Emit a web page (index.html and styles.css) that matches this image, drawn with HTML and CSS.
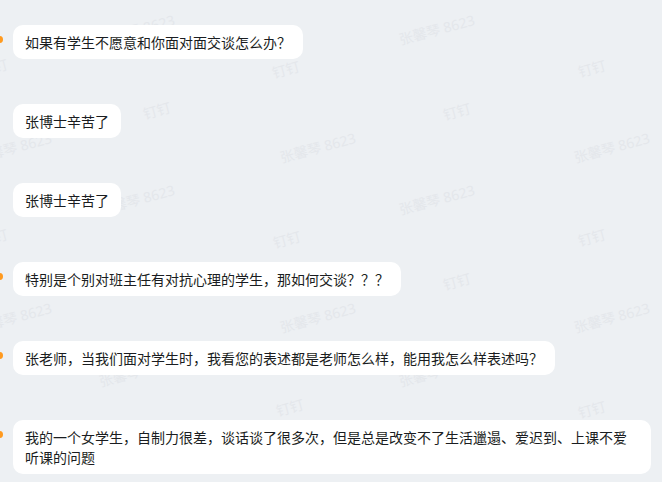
FILE: index.html
```html
<!DOCTYPE html>
<html lang="zh-CN">
<head>
<meta charset="utf-8">
<title>消息</title>
<link rel="stylesheet" href="styles.css">
</head>
<body>
<div class="page">
  <div class="watermarks" aria-hidden="true">
    <span class="wm name n1">张馨琴 8623</span>
    <span class="wm name n2">张馨琴 8623</span>
    <span class="wm name n3">张馨琴 8623</span>
    <span class="wm name n4">张馨琴 8623</span>
    <span class="wm name n5">张馨琴 8623</span>
    <span class="wm name n6">张馨琴 8623</span>
    <span class="wm name n7">张馨琴 8623</span>
    <span class="wm name n8">张馨琴 8623</span>
    <span class="wm name n9">张馨琴 8623</span>
    <span class="wm name n10">张馨琴 8623</span>
    <span class="wm name n11">张馨琴 8623</span>
    <span class="wm name n12">张馨琴 8623</span>
    <span class="wm ding d1">钉钉</span>
    <span class="wm ding d2">钉钉</span>
    <span class="wm ding d3">钉钉</span>
    <span class="wm ding d4">钉钉</span>
    <span class="wm ding d5">钉钉</span>
    <span class="wm ding d6">钉钉</span>
    <span class="wm ding d7">钉钉</span>
    <span class="wm ding d8">钉钉</span>
    <span class="wm ding d9">钉钉</span>
    <span class="wm ding d10">钉钉</span>
    <span class="wm ding d11">钉钉</span>
    <span class="wm ding d12">钉钉</span>
  </div>
  <ul class="messages">
    <li class="msg unread"><span class="dot"></span><div class="bubble">如果有学生不愿意和你面对面交谈怎么办<span class="q">？</span></div></li>
    <li class="msg"><span class="dot"></span><div class="bubble">张博士辛苦了</div></li>
    <li class="msg"><span class="dot"></span><div class="bubble">张博士辛苦了</div></li>
    <li class="msg unread"><span class="dot"></span><div class="bubble">特别是个别对班主任有对抗心理的学生，那如何交谈<span class="q">？？？</span></div></li>
    <li class="msg unread"><span class="dot"></span><div class="bubble">张老师，当我们面对学生时，我看您的表述都是老师怎么样，能用我怎么样表述吗<span class="q">？</span></div></li>
    <li class="msg unread"><span class="dot"></span><div class="bubble">我的一个女学生，自制力很差，谈话谈了很多次，但是总是改变不了生活邋遢、爱迟到、上课不爱听课的问题</div></li>
  </ul>
</div>
</body>
</html>
```
FILE: styles.css
```css
html, body {
  margin: 0;
  padding: 0;
}
body {
  background: #edf0f3;
  font-family: "Noto Sans CJK SC", "Liberation Sans", sans-serif;
  color: #1a1d21;
  width: 662px;
  height: 482px;
  overflow: hidden;
}
.page {
  position: relative;
  width: 662px;
  height: 482px;
  overflow: hidden;
}
.watermarks {
  position: absolute;
  inset: 0;
  pointer-events: none;
}
.wm {
  position: absolute;
  font-family: "Noto Sans", "Noto Sans CJK SC", sans-serif;
  font-size: 14px;
  line-height: 16px;
  color: #e4e7eb;
  white-space: nowrap;
  transform: translate(-50%, -50%) rotate(-15deg);
}
.n1 { left: 137px; top: 30px; }
.n2 { left: 437px; top: 30px; }
.n3 { left: 14px; top: 148px; }
.n4 { left: 318px; top: 148px; }
.n5 { left: 612px; top: 148px; }
.n6 { left: 137px; top: 200px; }
.n7 { left: 437px; top: 200px; }
.n8 { left: 14px; top: 318px; }
.n9 { left: 318px; top: 318px; }
.n10 { left: 612px; top: 318px; }
.n11 { left: 137px; top: 372px; }
.n12 { left: 437px; top: 372px; }
.d1 { left: -6px; top: 68px; }
.d2 { left: 286px; top: 70px; }
.d3 { left: 592px; top: 69px; }
.d4 { left: 157px; top: 111px; }
.d5 { left: 457px; top: 112px; }
.d6 { left: -6px; top: 238px; }
.d7 { left: 287px; top: 240px; }
.d8 { left: 592px; top: 238px; }
.d9 { left: 157px; top: 281px; }
.d10 { left: 457px; top: 282px; }
.d11 { left: 290px; top: 408px; }
.d12 { left: 592px; top: 410px; }

.messages {
  position: relative;
  list-style: none;
  margin: 0;
  padding: 25px 0 0 0;
  display: flex;
  flex-direction: column;
  gap: 45px;
}
.msg {
  display: flex;
  align-items: flex-start;
}
.dot {
  flex: none;
  width: 7px;
  height: 7px;
  margin: 11px 10px 0 -4px;
  border-radius: 50%;
  background: transparent;
}
.msg.unread .dot {
  background: #ff9a1f;
}
.bubble {
  background: #ffffff;
  border-radius: 10px;
  padding: 7px 12px;
  font-size: 14px;
  line-height: 20px;
  max-width: 614px;
}
.q {
  font-family: "Noto Sans CJK TC", "Noto Sans CJK SC", sans-serif;
}
```
